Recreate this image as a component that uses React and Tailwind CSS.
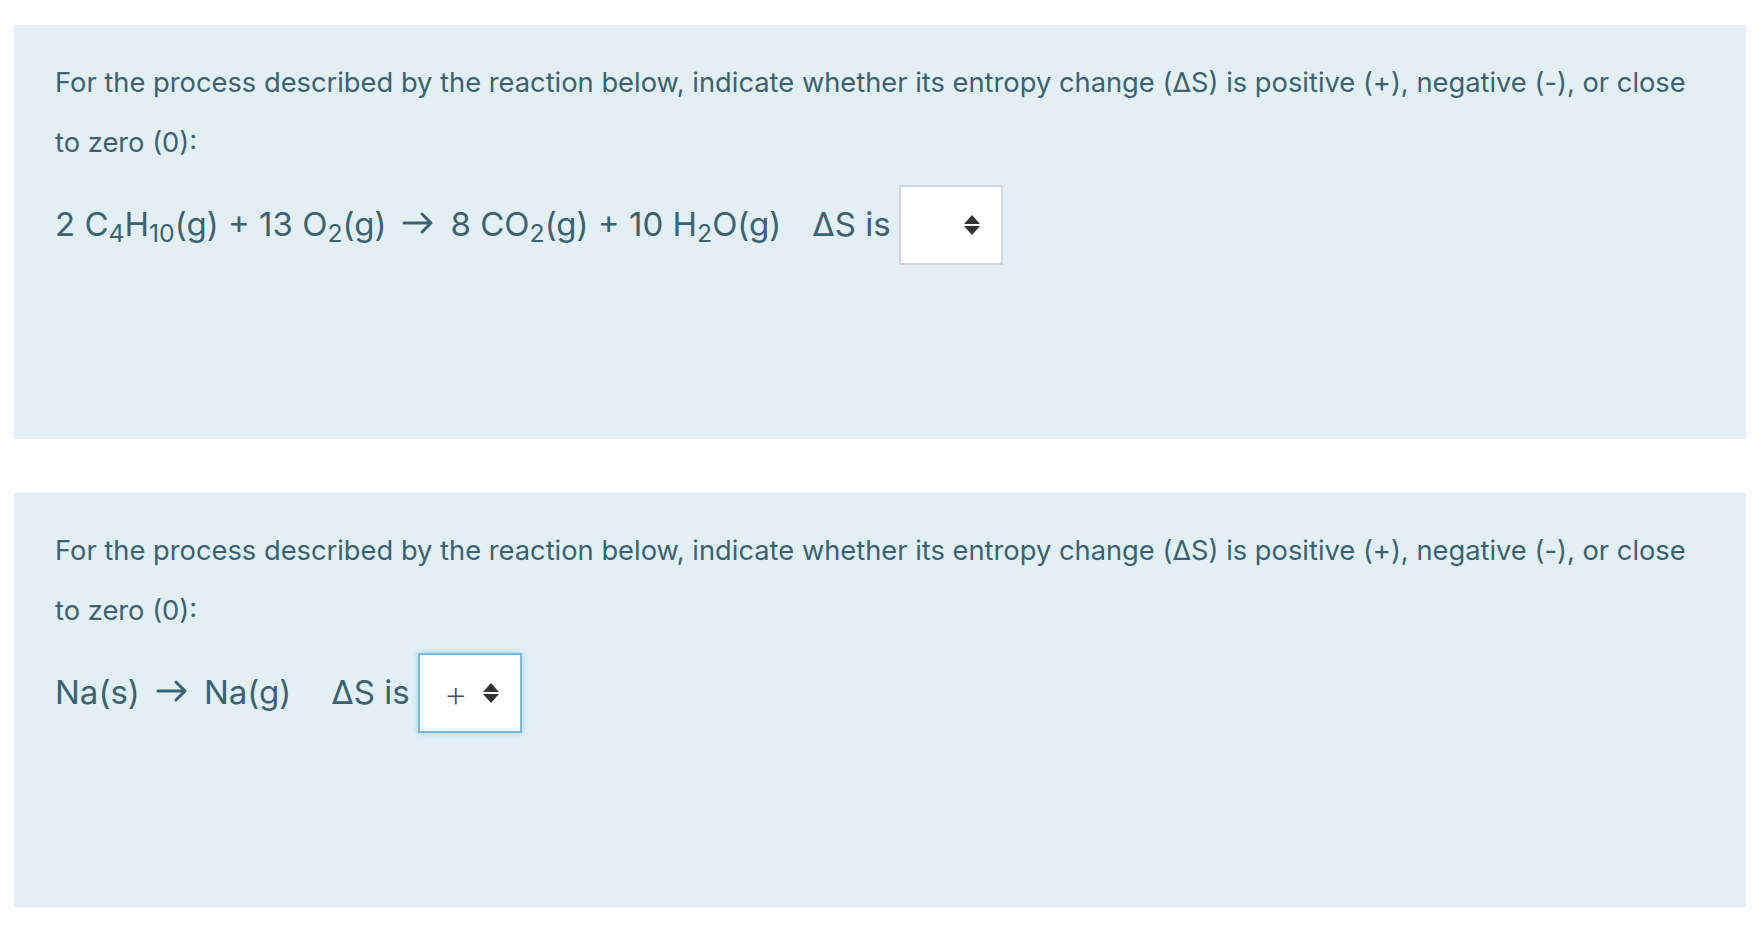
import React from "react";

const questions = [
  {
    id: 1,
    equation: (
      <>
        2 C<sub>4</sub>H<sub>10</sub>(g) + 13 O<sub>2</sub>(g)<Arrow />8 CO<sub>2</sub>(g) + 10 H<sub>2</sub>O(g)
      </>
    ),
    gap: "ml-[31px]",
    value: "",
    focused: false,
  },
  {
    id: 2,
    equation: (
      <>
        Na(s)<Arrow />Na(g)
      </>
    ),
    gap: "ml-[40px]",
    value: "+",
    focused: true,
  },
];

function Arrow() {
  return (
    <svg width="32" height="24" viewBox="0 0 32 24" className="inline-block align-[1px] mx-[16px]" fill="none" stroke="currentColor" strokeWidth="3" strokeLinecap="round" strokeLinejoin="round">
      <path d="M2 12h27M20 3l9 9-9 9" />
    </svg>
  );
}

function SortArrows() {
  return (
    <svg width="18" height="24" viewBox="0 0 18 24" fill="#333">
      <path d="M9 2l8 9H1z" />
      <path d="M9 22l8-9H1z" />
    </svg>
  );
}

function SelectBox({ value, focused }) {
  return (
    <div
      className={`flex items-center w-[104px] h-[80px] bg-white border-2 pl-[24px] ${
        focused ? "border-[#7ab8de] shadow-[0_0_6px_rgba(122,184,222,0.6)]" : "border-[#cfd6dc]"
      }`}
    >
      <span className="w-[38px] text-[38px] font-extralight text-[#4a4f55] leading-none">{value}</span>
      <SortArrows />
    </div>
  );
}

function Question({ q }) {
  return (
    <div className="bg-[#e2f0f6] h-[414px] pl-[41px] pr-[41px] pt-[28px] text-[#3b6272]">
      <p className="text-[27.3px] leading-[59.5px]">
        For the process described by the reaction below, indicate whether its entropy change (ΔS) is positive (+), negative (-), or close to zero (0):
      </p>
      <div className="flex items-center mt-[13px] text-[33px]">
        <span className="whitespace-nowrap">{q.equation}</span>
        <span className={`${q.gap} mr-[8px]`}>ΔS is</span>
        <SelectBox value={q.value} focused={q.focused} />
      </div>
    </div>
  );
}

export default function App() {
  return (
    <div className="bg-white min-h-screen pl-[14px] pr-[15px] pt-[25px]" style={{ fontFamily: "Inter, 'Noto Sans', sans-serif" }}>
      <div className="flex flex-col gap-[54px]">
        {questions.map((q) => (
          <Question key={q.id} q={q} />
        ))}
      </div>
    </div>
  );
}
